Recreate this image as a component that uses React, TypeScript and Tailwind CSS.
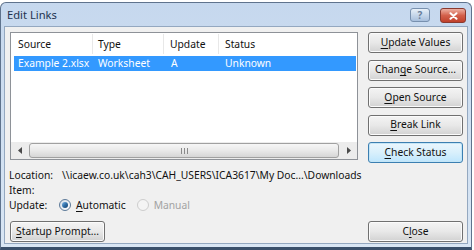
import React from "react";

const font = { fontFamily: '"Noto Sans", "Open Sans", sans-serif' };

function U({ children }: { children: React.ReactNode }) {
  return <span className="underline decoration-1 underline-offset-[2px]">{children}</span>;
}

function Btn({ children, focused, className = "" }: { children: React.ReactNode; focused?: boolean; className?: string }) {
  return (
    <div
      className={`flex h-[21px] w-[95px] shrink-0 items-center justify-center rounded-[3px] border text-[10.3px] text-[#111111] ${
        focused
          ? "border-[#3c7fb1] bg-gradient-to-b from-[#eaf6fd] via-[#d9f0fc] to-[#bee6fd] shadow-[inset_0_0_0_1px_#c4e5f6]"
          : "border-[#707070] bg-gradient-to-b from-[#f4f4f4] via-[#e8e8e8] to-[#d2d2d2] shadow-[inset_0_0_0_1px_#fbfbfb]"
      } ${className}`}
    >
      {children}
    </div>
  );
}

function Radio({ checked, disabled }: { checked?: boolean; disabled?: boolean }) {
  return (
    <div
      className={`flex h-[12px] w-[12px] shrink-0 items-center justify-center rounded-full border ${
        disabled ? "border-[#cdcdcd] bg-[#f4f4f4]" : "border-[#5d7a99] bg-gradient-to-br from-[#d3dde8] to-[#ffffff]"
      }`}
    >
      {checked && <div className="h-[6px] w-[6px] rounded-full bg-gradient-to-br from-[#7bb6e6] via-[#2f6fa8] to-[#173f6b]" />}
    </div>
  );
}

export default function App() {
  return (
    <div className="h-[250px] w-[474px] overflow-hidden whitespace-nowrap bg-white" style={font}>
      <div className="mt-[2px] flex h-[248px] w-[472px] flex-col rounded-t-[6px] border border-b-[3px] border-[#5f738d] border-b-[#3a506b] bg-gradient-to-b from-[#c6d8ee] via-[#cfdff1] to-[#d9e6f4]">
        {/* title bar */}
        <div className="flex h-[23px] shrink-0 items-start justify-between pl-[6px] pr-[5px]">
          <span className="pt-[4px] text-[11.2px] leading-[16px] text-[#1e3350]">Edit Links</span>
          <div className="flex items-start gap-[10px] pt-[5px]">
            <div className="flex h-[14px] w-[20px] items-center justify-center rounded-[3px] border border-[#7890ae] bg-gradient-to-b from-[#e8f0f8] via-[#c7d7ea] to-[#a8bfdc] text-[10px] font-bold leading-none text-[#6a7f9c]">
              ?
            </div>
            <div className="flex h-[15px] w-[26px] items-center justify-center rounded-[3px] border border-[#8a3a30] bg-gradient-to-b from-[#ecb0a3] via-[#d3604b] to-[#c0402a]">
              <svg width="9" height="8" viewBox="0 0 9 8">
                <path d="M1.5 1.2 L7.5 6.8 M7.5 1.2 L1.5 6.8" stroke="#ffffff" strokeWidth="2" strokeLinecap="round" />
              </svg>
            </div>
          </div>
        </div>
        {/* client area */}
        <div className="mx-[3px] mb-[3px] flex flex-1 flex-col border border-[#94a8c0] bg-[#f0f0f0] pl-[5px] pr-[4px] pt-[5px] text-[10.3px] text-[#111111]">
          <div className="flex justify-between">
            {/* list */}
            <div className="flex h-[128px] w-[348px] flex-col border border-[#8e9298] bg-white">
              <div className="flex h-[21px] items-center">
                <div className="w-[82px] border-r border-[#e8e8e8] pl-[7px] leading-[20px]">Source</div>
                <div className="w-[71px] border-r border-[#e8e8e8] pl-[5px] leading-[20px]">Type</div>
                <div className="w-[55px] border-r border-[#e8e8e8] pl-[6px] leading-[20px]">Update</div>
                <div className="flex-1 pl-[6px] leading-[20px]">Status</div>
              </div>
              <div className="ml-[3px] mr-[1px] mt-[2px] flex h-[15px] items-center bg-[#3399ff] text-white">
                <div className="w-[79px] pl-[4px]">Example 2.xlsx</div>
                <div className="w-[71px] pl-[5px]">Worksheet</div>
                <div className="w-[55px] pl-[7px]">A</div>
                <div className="flex-1 pl-[6px]">Unknown</div>
              </div>
              <div className="flex-1" />
              {/* scrollbar */}
              <div className="flex h-[17px] items-center bg-[#ececec]">
                <div className="flex w-[17px] items-center justify-center">
                  <svg width="4" height="7" viewBox="0 0 4 7"><path d="M4 0 L0 3.5 L4 7Z" fill="#4a4a4a" /></svg>
                </div>
                <div className="mx-[1px] flex h-[15px] flex-1 items-center justify-center rounded-[3px] border border-[#a0a0a0] bg-gradient-to-b from-[#f6f6f6] via-[#e9e9e9] to-[#d6d6d6]">
                  <svg width="7" height="6" viewBox="0 0 7 6"><path d="M0.5 0v6M3.5 0v6M6.5 0v6" stroke="#8a8a8a" strokeWidth="1" /></svg>
                </div>
                <div className="flex w-[17px] items-center justify-center">
                  <svg width="4" height="7" viewBox="0 0 4 7"><path d="M0 0 L4 3.5 L0 7Z" fill="#4a4a4a" /></svg>
                </div>
              </div>
            </div>
            {/* right buttons */}
            <div className="flex flex-col gap-[6.5px]">
              <Btn>
                <U>U</U>pdate Values
              </Btn>
              <Btn>
                Chan<U>g</U>e Source...
              </Btn>
              <Btn>
                <U>O</U>pen Source
              </Btn>
              <Btn>
                <U>B</U>reak Link
              </Btn>
              <Btn focused>
                <U>C</U>heck Status
              </Btn>
            </div>
          </div>
          <div className="-ml-[1px] mt-[4.5px] flex flex-col leading-[15px]">
            <div className="flex">
              <span className="w-[53px] shrink-0">Location:</span>
              <span>\\icaew.co.uk\cah3\CAH_USERS\ICA3617\My Doc...\Downloads</span>
            </div>
            <div>Item:</div>
            <div className="flex items-center">
              <span className="w-[50px] shrink-0">Update:</span>
              <Radio checked />
              <span className="ml-[5px]">
                <U>A</U>utomatic
              </span>
              <span className="ml-[11px]">
                <Radio disabled />
              </span>
              <span className="ml-[5px] text-[#a3a3a3]">Manual</span>
            </div>
          </div>
          <div className="mt-[8.5px] flex justify-between">
            <Btn>
              <U>S</U>tartup Prompt...
            </Btn>
            <Btn>
              C<U>l</U>ose
            </Btn>
          </div>
        </div>
      </div>
    </div>
  );
}
